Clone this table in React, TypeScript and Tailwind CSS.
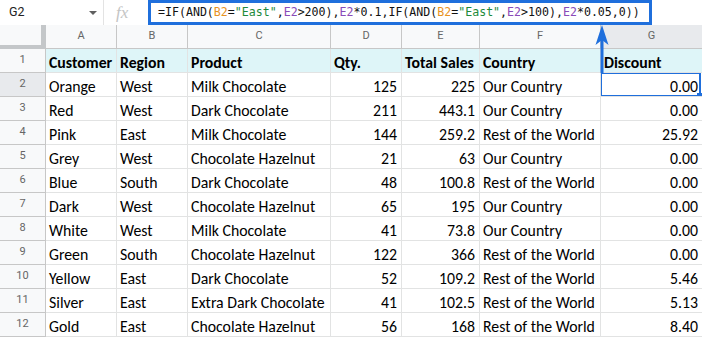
import React from "react";

type Row = [string, string, string, number, string, string, string];

const rows: Row[] = [
  ["Orange", "West", "Milk Chocolate", 125, "225", "Our Country", "0.00"],
  ["Red", "West", "Dark Chocolate", 211, "443.1", "Our Country", "0.00"],
  ["Pink", "East", "Milk Chocolate", 144, "259.2", "Rest of the World", "25.92"],
  ["Grey", "West", "Chocolate Hazelnut", 21, "63", "Our Country", "0.00"],
  ["Blue", "South", "Dark Chocolate", 48, "100.8", "Rest of the World", "0.00"],
  ["Dark", "West", "Chocolate Hazelnut", 65, "195", "Our Country", "0.00"],
  ["White", "West", "Milk Chocolate", 41, "73.8", "Our Country", "0.00"],
  ["Green", "South", "Chocolate Hazelnut", 122, "366", "Rest of the World", "0.00"],
  ["Yellow", "East", "Dark Chocolate", 52, "109.2", "Rest of the World", "5.46"],
  ["Silver", "East", "Extra Dark Chocolate", 41, "102.5", "Rest of the World", "5.13"],
  ["Gold", "East", "Chocolate Hazelnut", 56, "168", "Rest of the World", "8.40"],
];

const cols = ["A", "B", "C", "D", "E", "F", "G"];
const heads = ["Customer", "Region", "Product", "Qty.", "Total Sales", "Country", "Discount"];

const gridCols = "grid grid-cols-[46px_71px_71px_143px_71px_78px_121px_101px]";
const cellBase =
  "h-[24px] border-b border-[#e2e3e3] pt-[4px] leading-[19px] whitespace-nowrap overflow-hidden text-[15.8px] text-black [font-family:Carlito,Calibri,Lato,sans-serif]";
const rowHead =
  "h-[24px] border-b border-r border-[#c7c7c7] flex items-center justify-center text-[11px] text-[#666] [font-family:Roboto,Arial,sans-serif]";

function Formula() {
  const o = "text-[#e8931f]";
  const g = "text-[#1e8a3b]";
  const p = "text-[#8a4bb8]";
  return (
    <span className="text-[11.6px] text-[#111] [font-family:'DejaVu_Sans_Mono',monospace] whitespace-pre">
      =IF(AND(<span className={o}>B2</span>=<span className={g}>"East"</span>,<span className={p}>E2</span>&gt;200),
      <span className={p}>E2</span>*0.1,IF(AND(<span className={o}>B2</span>=<span className={g}>"East"</span>,
      <span className={p}>E2</span>&gt;100),<span className={p}>E2</span>*0.05,0))
    </span>
  );
}

export default function App() {
  return (
    <div className="relative w-[702px] h-[337px] overflow-hidden bg-white">
      {/* formula bar */}
      <div className="flex h-[25px] bg-white">
        <div className="w-[104px] flex items-center pl-[9px] pr-[6px] border-r border-[#e3e3e3]">
          <span className="text-[12.5px] text-[#222] [font-family:Roboto,Arial,sans-serif]">G2</span>
          <span className="ml-auto w-0 h-0 border-l-[4px] border-r-[4px] border-t-[4px] border-l-transparent border-r-transparent border-t-[#5f5f5f]" />
        </div>
        <div className="w-[44px] flex items-center pl-[12px]">
          <span className="italic text-[17px] leading-none text-[#c4c4c4] [font-family:'Liberation_Serif',serif]">fx</span>
        </div>
        <div className="w-[504px] h-[25px] border-[3px] border-[#1f6fdc] flex items-center pl-[7px]">
          <Formula />
        </div>
      </div>

      {/* column headers */}
      <div className={gridCols}>
        <div className="h-[24px] bg-[#f8f9fa] border-r-[5px] border-b-[4px] border-[#c4c7c9]" />
        {cols.map((c, i) => (
          <div
            key={c}
            className={`h-[24px] flex items-center justify-center border-b border-[#c7c7c7] text-[11px] text-[#666] [font-family:Roboto,Arial,sans-serif] ${
              i === 6 ? "bg-[#e8eaed]" : "bg-[#f8f9fa] border-r"
            }`}
          >
            {c}
          </div>
        ))}
      </div>

      {/* header row 1 */}
      <div className={gridCols}>
        <div className={`${rowHead} bg-[#f8f9fa]`}>1</div>
        {heads.map((h, i) => (
          <div
            key={h}
            className={`${cellBase} font-bold bg-[#def5f8] pl-[3px] ${i === 6 ? "" : "border-r"}`}
          >
            {h}
          </div>
        ))}
      </div>

      {/* data rows */}
      {rows.map((r, ri) => (
        <div key={ri} className={gridCols}>
          <div className={`${rowHead} ${ri === 0 ? "bg-[#e8eaed]" : "bg-[#f8f9fa]"}`}>{ri + 2}</div>
          {r.map((v, ci) => {
            const num = ci === 3 || ci === 4 || ci === 6;
            return (
              <div
                key={ci}
                className={`${cellBase} relative ${num ? "text-right pr-[4px]" : "pl-[3px]"} ${
                  ci === 6 ? "" : "border-r"
                }`}
              >
                {v}
                {ri === 0 && ci === 6 && (
                  <>
                    <div className="absolute left-[-1px] top-[-1px] right-[1px] bottom-[-1px] border-[2px] border-[#1f6fdc]" />
                    <div className="absolute right-0 bottom-[-2px] w-[5px] h-[5px] bg-[#1f6fdc]" />
                  </>
                )}
              </div>
            );
          })}
        </div>
      ))}

      {/* arrow */}
      <svg className="absolute left-[594px] top-[24px]" width="16" height="50" viewBox="0 0 16 50">
        <rect x="6.5" y="14" width="3" height="35" fill="#1f6fdc" />
        <path d="M8 1 L14.5 21 L8 16 L1.5 21 Z" fill="#1f6fdc" />
      </svg>
    </div>
  );
}
